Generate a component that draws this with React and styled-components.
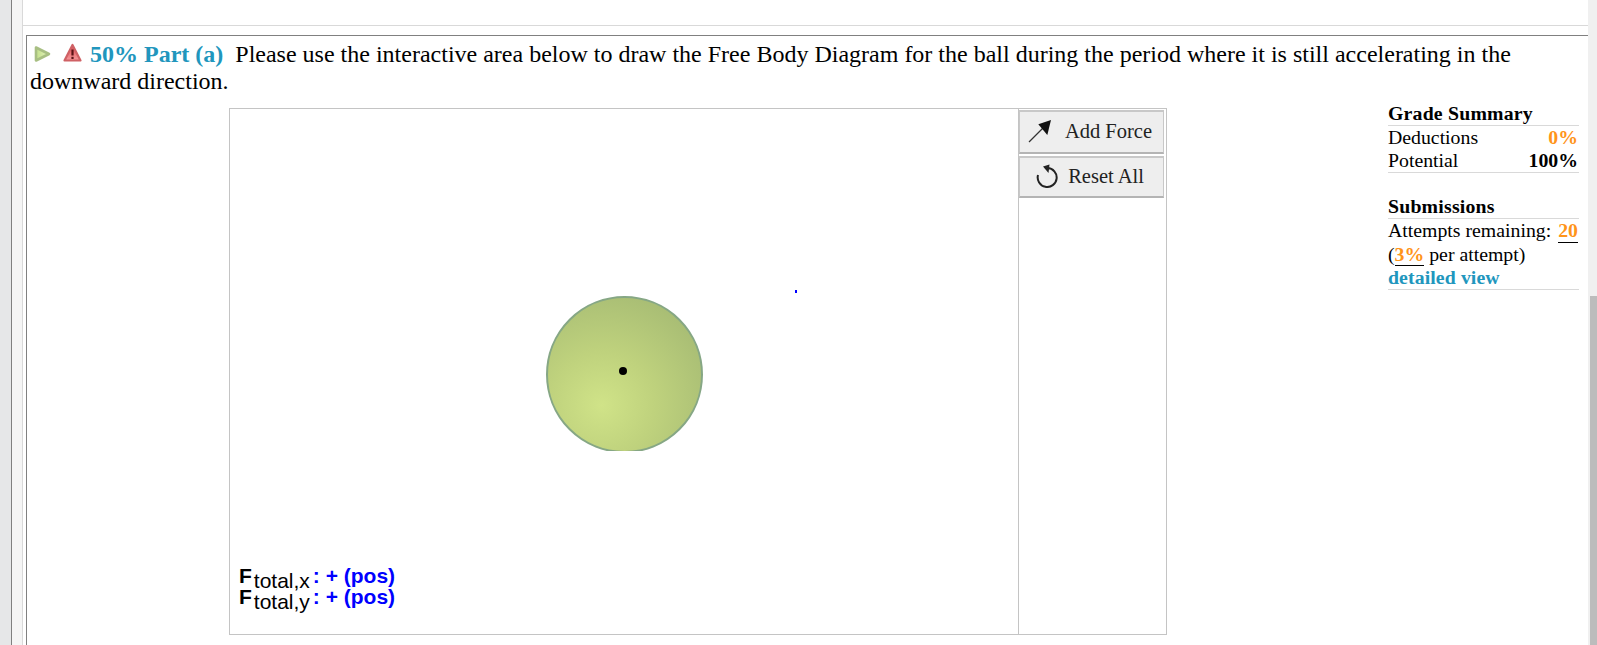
import styled, { createGlobalStyle } from 'styled-components';

const GlobalStyle = createGlobalStyle`
  html, body {
    margin: 0;
    padding: 0;
    height: 100%;
    overflow: hidden;
    background: #fff;
  }
  #root {
    height: 100%;
  }
`;

const Page = styled.div`
  display: flex;
  height: 645px;
  width: 1597px;
  font-family: "Liberation Serif", "Times New Roman", serif;
  color: #000;
`;

const Gutter = styled.div`
  width: 11px;
  flex: none;
  background: #e6e7e8;
  border-right: 1px solid #808080;
`;

const GutterInner = styled.div`
  width: 10px;
  flex: none;
  background: #f5f5f5;
  border-right: 1px solid #d9d9d9;
`;

const Main = styled.div`
  flex: 1;
  min-width: 0;
  display: flex;
  flex-direction: column;
`;

const TopBar = styled.div`
  height: 25px;
  flex: none;
  border-bottom: 1px solid #d9d9d9;
`;

const Question = styled.div`
  flex: 1;
  margin: 9px 0 0 3px;
  border-top: 1px solid #808080;
  border-left: 1px solid #808080;
`;

const Prompt = styled.div`
  padding: 5px 0 0 3px;
  font-size: 24px;
  line-height: 27px;
  height: 72px;
  box-sizing: border-box;
`;

const PartLabel = styled.b`
  color: #2196bd;
  margin-right: 6px;
`;

const PromptIcon = styled.svg`
  vertical-align: -1px;
  margin: ${(p) => p.$margin};
`;

const Workspace = styled.div`
  display: flex;
  align-items: flex-start;
  margin-left: 202px;
`;

const Interactive = styled.div`
  display: flex;
  width: 936px;
  height: 525px;
  flex: none;
  border: 1px solid #c4c4c4;
`;

const Canvas = styled.div`
  position: relative;
  width: 788px;
  flex: none;
  border-right: 1px solid #c4c4c4;
`;

const BallClip = styled.div`
  position: absolute;
  left: 316px;
  top: 187px;
  width: 157px;
  height: 155px;
  overflow: hidden;
`;

const Ball = styled.div`
  width: 157px;
  height: 157px;
  box-sizing: border-box;
  border-radius: 50%;
  border: 2px solid #86a785;
  background: radial-gradient(circle at 35% 70%, #d0e388 0%, #bfd27d 36%, #a7bc74 82%);
`;

const CenterDot = styled.div`
  position: absolute;
  left: 389px;
  top: 258px;
  width: 8px;
  height: 8px;
  border-radius: 50%;
  background: #000;
`;

const BlueDot = styled.div`
  position: absolute;
  left: 565px;
  top: 181px;
  width: 2px;
  height: 3px;
  background: #0000ff;
`;

const Totals = styled.div`
  position: absolute;
  left: 9px;
  bottom: 27px;
  font-family: "Liberation Sans", Arial, sans-serif;
  font-size: 21px;
  line-height: 21px;
`;

const TotalRow = styled.div`
  display: flex;
  align-items: flex-start;
  height: 21px;
`;

const Bold = styled.b`
  font-weight: 700;
`;

const Sub = styled.span`
  margin: 5px 0 0 2px;
`;

const Sign = styled.b`
  color: #0000ff;
  margin-left: 3px;
  white-space: pre;
`;

const Tools = styled.div`
  flex: 1;
  padding-top: 1px;
`;

const ToolButton = styled.button`
  display: flex;
  align-items: center;
  justify-content: center;
  gap: ${(p) => p.$gap};
  width: 145px;
  height: ${(p) => p.$height};
  margin: 0 0 2px;
  padding: 0 ${(p) => p.$trim} 2px 0;
  box-sizing: border-box;
  background: #eeeeee;
  border: 1px solid #c8c8c8;
  border-top-width: 2px;
  border-bottom: 2px solid #b4b4b4;
  border-radius: 0;
  font-family: "Liberation Serif", "Times New Roman", serif;
  font-size: 20.5px;
  color: #222;
`;

const Side = styled.div`
  width: 191px;
  margin-left: 221px;
  margin-top: -6px;
  font-size: 19.8px;
  line-height: 23px;
`;

const SideTitle = styled.div`
  font-weight: 700;
  letter-spacing: 0.2px;
  border-bottom: 1px solid #d9d9d9;
  height: 23px;
`;

const SideSection = styled.div`
  border-bottom: 1px solid #d9d9d9;
  margin-bottom: ${(p) => p.$gap || 0};
`;

const SideRow = styled.div`
  display: flex;
  justify-content: space-between;
  padding-right: 1px;
`;

const Orange = styled.b`
  color: #ff9419;
`;

const Underlined = styled(Orange)`
  border-bottom: 1px solid #000;
`;

const DetailLink = styled.b`
  display: block;
  color: #2196bd;
  letter-spacing: 0.1px;
`;

const ScrollTrack = styled.div`
  width: 9px;
  flex: none;
  background: #f0f0f0;
  display: flex;
  justify-content: flex-end;
  padding-top: 296px;
  box-sizing: border-box;
`;

const ScrollThumb = styled.div`
  width: 7px;
  height: 100%;
  background: #bcbcbc;
`;

function FreeBodyCanvas() {
  return (
    <Canvas>
      <BallClip>
        <Ball />
      </BallClip>
      <CenterDot />
      <BlueDot />
      <Totals>
        <TotalRow>
          <Bold>F</Bold>
          <Sub>total,x</Sub>
          <Sign>: + (pos)</Sign>
        </TotalRow>
        <TotalRow>
          <Bold>F</Bold>
          <Sub>total,y</Sub>
          <Sign>: + (pos)</Sign>
        </TotalRow>
      </Totals>
    </Canvas>
  );
}

export default function App() {
  return (
    <Page>
      <GlobalStyle />
      <Gutter />
      <GutterInner />
      <Main>
        <TopBar />
        <Question>
          <Prompt>
            <PromptIcon $margin="0 12px 0 4px" width="17" height="18" viewBox="0 0 17 18">
              <defs>
                <linearGradient id="playFill" x1="0" y1="0" x2="1" y2="0">
                  <stop offset="0" stopColor="#c3e08a" />
                  <stop offset="1" stopColor="#e4f2bd" />
                </linearGradient>
              </defs>
              <path d="M2 2.5 L15 9 L2 15.5 Z" fill="url(#playFill)" stroke="#a8bf83" strokeWidth="2.6" strokeLinejoin="round" />
            </PromptIcon>
            <PromptIcon $margin="0 8px 0 0" width="19" height="20" viewBox="0 0 19 20">
              <defs>
                <linearGradient id="warnFill" x1="0" y1="0" x2="0" y2="1">
                  <stop offset="0" stopColor="#e0494e" />
                  <stop offset="1" stopColor="#f59a9c" />
                </linearGradient>
              </defs>
              <path d="M9.5 2 L17.5 17.5 L1.5 17.5 Z" fill="url(#warnFill)" stroke="#cf6165" strokeWidth="2.2" strokeLinejoin="round" />
              <rect x="8.4" y="6.5" width="2.2" height="6" fill="#5a1316" />
              <rect x="8.4" y="13.8" width="2.2" height="2.2" fill="#5a1316" />
            </PromptIcon>
            <PartLabel>50% Part (a)</PartLabel>
            {' '}Please use the interactive area below to draw the Free Body Diagram for the ball during the period where it is still accelerating in the
            <br />
            downward direction.
          </Prompt>
          <Workspace>
            <Interactive>
              <FreeBodyCanvas />
              <Tools>
                <ToolButton $height="44px" $gap="13px" $trim="3px">
                  <svg width="24" height="24" viewBox="0 0 24 24">
                    <path d="M1 23 L15 9" stroke="#333" strokeWidth="1.2" />
                    <path d="M23 1 L19.3 16 L10.3 5.3 Z" fill="#111" />
                  </svg>
                  Add Force
                </ToolButton>
                <ToolButton $height="42px" $gap="9px" $trim="4px">
                  <svg width="24" height="24" viewBox="0 0 24 24" fill="none">
                    <path d="M12.5 4 A9.5 9.5 0 1 1 3 11" stroke="#222" strokeWidth="2" />
                    <path d="M8 2.5 L14.5 0.5 L13.5 9 Z" fill="#222" />
                  </svg>
                  Reset All
                </ToolButton>
              </Tools>
            </Interactive>
            <Side>
              <SideTitle>Grade Summary</SideTitle>
              <SideSection $gap="22px">
                <SideRow>
                  <span>Deductions</span>
                  <Orange>0%</Orange>
                </SideRow>
                <SideRow>
                  <span>Potential</span>
                  <Bold>100%</Bold>
                </SideRow>
              </SideSection>
              <SideTitle>Submissions</SideTitle>
              <SideSection>
                <SideRow>
                  <span>Attempts remaining:</span>
                  <Underlined>20</Underlined>
                </SideRow>
                <div>
                  (<Underlined>3%</Underlined> per attempt)
                </div>
                <DetailLink>detailed view</DetailLink>
              </SideSection>
            </Side>
          </Workspace>
        </Question>
      </Main>
      <ScrollTrack>
        <ScrollThumb />
      </ScrollTrack>
    </Page>
  );
}
